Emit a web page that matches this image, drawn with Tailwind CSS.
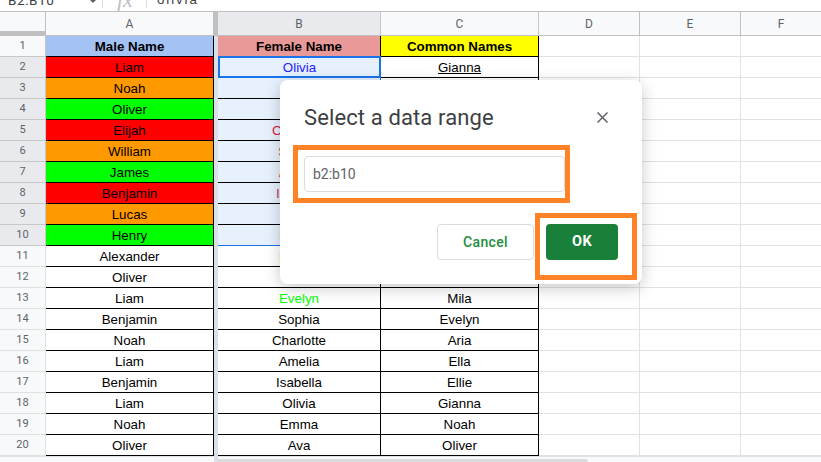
<!DOCTYPE html>
<html>
<head>
<meta charset="utf-8">
<script src="https://cdn.jsdelivr.net/npm/@tailwindcss/browser@4"></script>
</head>
<body class="bg-white">
<div class="relative h-[462px] w-[821px] overflow-hidden font-['Liberation_Sans',sans-serif] text-[13.33px] text-black">

  <!-- formula bar, cut by the top of the window -->
  <div class="flex h-[11px] items-start overflow-hidden bg-white text-[#3c4043]">
    <span class="-mt-[7px] ml-[8px] w-[80px] font-['Roboto',sans-serif] text-[13.5px] leading-[14px] tracking-[0.6px]">B2:B10</span>
    <span class="h-0 w-0 border-x-[3px] border-t-[3px] border-x-transparent border-t-[#5f6368] ml-[2px]"></span>
    <span class="ml-[6px] h-[8px] w-px bg-[#dadce0]"></span>
    <span class="-mt-[11px] ml-[14px] w-[29px] font-['Liberation_Serif',serif] text-[22px] italic leading-[22px] text-[#bdc1c6]">fx</span>
    <span class="h-[8px] w-px bg-[#dadce0]"></span>
    <span class="-mt-[7px] ml-[10px] font-['Liberation_Sans',sans-serif] text-[13.33px] leading-[14px] tracking-[1.9px]">olivia</span>
  </div>

  <!-- column headers -->
  <div class="grid h-[25px] grid-cols-[46px_168px_4px_163px_158px_101px_101px_1fr] border-y border-[#c0c0c0] bg-[#f8f9fa] font-['Roboto',sans-serif] text-[12px] text-[#5f6368]">
    <div class="border-r border-b-[4px] border-[#c0c0c0]"></div>
    <div class="flex items-center justify-center border-r border-[#c0c0c0]">A</div>
    <div class="bg-[#c0c0c0]"></div>
    <div class="flex items-center justify-center border-r border-[#c8c8c8] bg-[#e8eaed]">B</div>
    <div class="flex items-center justify-center border-r border-[#c8c8c8]">C</div>
    <div class="flex items-center justify-center border-r border-[#c0c0c0]">D</div>
    <div class="flex items-center justify-center border-r border-[#c0c0c0]">E</div>
    <div class="flex items-center justify-center">F</div>
  </div>

  <!-- rows -->
  <div class="grid grid-cols-[46px_168px_4px_163px_158px_101px_101px_1fr] auto-rows-[21px]">
    <!-- 1 -->
    <div class="flex items-center justify-center border-r border-b border-[#c8c8c8] bg-[#f8f9fa] font-['Roboto',sans-serif] text-[11px] text-[#5f6368]">1</div>
    <div class="flex items-center justify-center border-r border-b border-black bg-[#a4c2f4] pt-[2px] font-bold">Male Name</div>
    <div class="bg-[#dadfe8]"></div>
    <div class="flex items-center justify-center border-r border-b border-black bg-[#ea9999] pt-[2px] font-bold">Female Name</div>
    <div class="flex items-center justify-center border-r border-b border-black bg-[#ffff00] pt-[2px] font-bold">Common Names</div>
    <div class="border-r border-b border-[#e2e2e2]"></div><div class="border-r border-b border-[#e2e2e2]"></div><div class="border-b border-[#e2e2e2]"></div>
    <!-- 2 -->
    <div class="flex items-center justify-center border-r border-b border-[#c8c8c8] bg-[#e8eaed] font-['Roboto',sans-serif] text-[11px] text-[#5f6368]">2</div>
    <div class="flex items-center justify-center border-r border-b border-black bg-[#ff0000] pt-[2px]">Liam</div>
    <div class="bg-[#dadfe8]"></div>
    <div class="-mt-px flex h-[22px] items-center justify-center border-2 border-[#1a73e8] bg-[#e7f0fd] pt-[2px] text-[#2222ff]">Olivia</div>
    <div class="flex items-center justify-center border-r border-b border-black pt-[2px] underline">Gianna</div>
    <div class="border-r border-b border-[#e2e2e2]"></div><div class="border-r border-b border-[#e2e2e2]"></div><div class="border-b border-[#e2e2e2]"></div>
    <!-- 3 -->
    <div class="flex items-center justify-center border-r border-b border-[#c8c8c8] bg-[#e8eaed] font-['Roboto',sans-serif] text-[11px] text-[#5f6368]">3</div>
    <div class="flex items-center justify-center border-r border-b border-black bg-[#ff9900] pt-[2px]">Noah</div>
    <div class="bg-[#dadfe8]"></div>
    <div class="border-r border-b border-black border-r-[#1a73e8] bg-[#e7f0fd]"></div>
    <div class="border-r border-b border-black"></div>
    <div class="border-r border-b border-[#e2e2e2]"></div><div class="border-r border-b border-[#e2e2e2]"></div><div class="border-b border-[#e2e2e2]"></div>
    <!-- 4 -->
    <div class="flex items-center justify-center border-r border-b border-[#c8c8c8] bg-[#e8eaed] font-['Roboto',sans-serif] text-[11px] text-[#5f6368]">4</div>
    <div class="flex items-center justify-center border-r border-b border-black bg-[#00ff00] pt-[2px]">Oliver</div>
    <div class="bg-[#dadfe8]"></div>
    <div class="border-r border-b border-black border-r-[#1a73e8] bg-[#e7f0fd]"></div>
    <div class="border-r border-b border-black"></div>
    <div class="border-r border-b border-[#e2e2e2]"></div><div class="border-r border-b border-[#e2e2e2]"></div><div class="border-b border-[#e2e2e2]"></div>
    <!-- 5 -->
    <div class="flex items-center justify-center border-r border-b border-[#c8c8c8] bg-[#e8eaed] font-['Roboto',sans-serif] text-[11px] text-[#5f6368]">5</div>
    <div class="flex items-center justify-center border-r border-b border-black bg-[#ff0000] pt-[2px]">Elijah</div>
    <div class="bg-[#dadfe8]"></div>
    <div class="flex items-center justify-center border-r border-b border-black border-r-[#1a73e8] bg-[#e7f0fd] pt-[2px] text-[#e0143c]">Charlotte</div>
    <div class="border-r border-b border-black"></div>
    <div class="border-r border-b border-[#e2e2e2]"></div><div class="border-r border-b border-[#e2e2e2]"></div><div class="border-b border-[#e2e2e2]"></div>
    <!-- 6 -->
    <div class="flex items-center justify-center border-r border-b border-[#c8c8c8] bg-[#e8eaed] font-['Roboto',sans-serif] text-[11px] text-[#5f6368]">6</div>
    <div class="flex items-center justify-center border-r border-b border-black bg-[#ff9900] pt-[2px]">William</div>
    <div class="bg-[#dadfe8]"></div>
    <div class="flex items-center justify-center border-r border-b border-black border-r-[#1a73e8] bg-[#e7f0fd] pt-[2px] text-[#d04030]">Sophia</div>
    <div class="border-r border-b border-black"></div>
    <div class="border-r border-b border-[#e2e2e2]"></div><div class="border-r border-b border-[#e2e2e2]"></div><div class="border-b border-[#e2e2e2]"></div>
    <!-- 7 -->
    <div class="flex items-center justify-center border-r border-b border-[#c8c8c8] bg-[#e8eaed] font-['Roboto',sans-serif] text-[11px] text-[#5f6368]">7</div>
    <div class="flex items-center justify-center border-r border-b border-black bg-[#00ff00] pt-[2px]">James</div>
    <div class="bg-[#dadfe8]"></div>
    <div class="flex items-center justify-center border-r border-b border-black border-r-[#1a73e8] bg-[#e7f0fd] pt-[2px] text-[#e05030]">Amelia</div>
    <div class="border-r border-b border-black"></div>
    <div class="border-r border-b border-[#e2e2e2]"></div><div class="border-r border-b border-[#e2e2e2]"></div><div class="border-b border-[#e2e2e2]"></div>
    <!-- 8 -->
    <div class="flex items-center justify-center border-r border-b border-[#c8c8c8] bg-[#e8eaed] font-['Roboto',sans-serif] text-[11px] text-[#5f6368]">8</div>
    <div class="flex items-center justify-center border-r border-b border-black bg-[#ff0000] pt-[2px]">Benjamin</div>
    <div class="bg-[#dadfe8]"></div>
    <div class="flex items-center justify-center border-r border-b border-black border-r-[#1a73e8] bg-[#e7f0fd] pt-[2px] text-[#c23b60]">Isabella</div>
    <div class="border-r border-b border-black"></div>
    <div class="border-r border-b border-[#e2e2e2]"></div><div class="border-r border-b border-[#e2e2e2]"></div><div class="border-b border-[#e2e2e2]"></div>
    <!-- 9 -->
    <div class="flex items-center justify-center border-r border-b border-[#c8c8c8] bg-[#e8eaed] font-['Roboto',sans-serif] text-[11px] text-[#5f6368]">9</div>
    <div class="flex items-center justify-center border-r border-b border-black bg-[#ff9900] pt-[2px]">Lucas</div>
    <div class="bg-[#dadfe8]"></div>
    <div class="border-r border-b border-black border-r-[#1a73e8] bg-[#e7f0fd]"></div>
    <div class="border-r border-b border-black"></div>
    <div class="border-r border-b border-[#e2e2e2]"></div><div class="border-r border-b border-[#e2e2e2]"></div><div class="border-b border-[#e2e2e2]"></div>
    <!-- 10 -->
    <div class="flex items-center justify-center border-r border-b border-[#c8c8c8] bg-[#e8eaed] font-['Roboto',sans-serif] text-[11px] text-[#5f6368]">10</div>
    <div class="flex items-center justify-center border-r border-b border-black bg-[#00ff00] pt-[2px]">Henry</div>
    <div class="bg-[#dadfe8]"></div>
    <div class="flex items-center justify-center border-r border-b border-[#1a73e8] bg-[#e7f0fd] pt-[2px] text-[#e4e050]">Evelyn</div>
    <div class="border-r border-b border-black"></div>
    <div class="border-r border-b border-[#e2e2e2]"></div><div class="border-r border-b border-[#e2e2e2]"></div><div class="border-b border-[#e2e2e2]"></div>
    <!-- 11 -->
    <div class="flex items-center justify-center border-r border-b border-[#e0e0e0] bg-[#f8f9fa] font-['Roboto',sans-serif] text-[11px] text-[#5f6368]">11</div>
    <div class="flex items-center justify-center border-r border-b border-black pt-[2px]">Alexander</div>
    <div class="bg-[#dadfe8]"></div>
    <div class="flex items-center justify-center border-r border-b border-black pt-[2px] text-[#e4e050]">Evelyn</div>
    <div class="border-r border-b border-black"></div>
    <div class="border-r border-b border-[#e2e2e2]"></div><div class="border-r border-b border-[#e2e2e2]"></div><div class="border-b border-[#e2e2e2]"></div>
    <!-- 12 -->
    <div class="flex items-center justify-center border-r border-b border-[#e0e0e0] bg-[#f8f9fa] font-['Roboto',sans-serif] text-[11px] text-[#5f6368]">12</div>
    <div class="flex items-center justify-center border-r border-b border-black pt-[2px]">Oliver</div>
    <div class="bg-[#dadfe8]"></div>
    <div class="border-r border-b border-black"></div>
    <div class="border-r border-b border-black"></div>
    <div class="border-r border-b border-[#e2e2e2]"></div><div class="border-r border-b border-[#e2e2e2]"></div><div class="border-b border-[#e2e2e2]"></div>
    <!-- 13 -->
    <div class="flex items-center justify-center border-r border-b border-[#e0e0e0] bg-[#f8f9fa] font-['Roboto',sans-serif] text-[11px] text-[#5f6368]">13</div>
    <div class="flex items-center justify-center border-r border-b border-black pt-[2px]">Liam</div>
    <div class="bg-[#dadfe8]"></div>
    <div class="flex items-center justify-center border-r border-b border-black pt-[2px] text-[#00ff00]">Evelyn</div>
    <div class="flex items-center justify-center border-r border-b border-black pt-[2px]">Mila</div>
    <div class="border-r border-b border-[#e2e2e2]"></div><div class="border-r border-b border-[#e2e2e2]"></div><div class="border-b border-[#e2e2e2]"></div>
    <!-- 14 -->
    <div class="flex items-center justify-center border-r border-b border-[#e0e0e0] bg-[#f8f9fa] font-['Roboto',sans-serif] text-[11px] text-[#5f6368]">14</div>
    <div class="flex items-center justify-center border-r border-b border-black pt-[2px]">Benjamin</div>
    <div class="bg-[#dadfe8]"></div>
    <div class="flex items-center justify-center border-r border-b border-black pt-[2px]">Sophia</div>
    <div class="flex items-center justify-center border-r border-b border-black pt-[2px]">Evelyn</div>
    <div class="border-r border-b border-[#e2e2e2]"></div><div class="border-r border-b border-[#e2e2e2]"></div><div class="border-b border-[#e2e2e2]"></div>
    <!-- 15 -->
    <div class="flex items-center justify-center border-r border-b border-[#e0e0e0] bg-[#f8f9fa] font-['Roboto',sans-serif] text-[11px] text-[#5f6368]">15</div>
    <div class="flex items-center justify-center border-r border-b border-black pt-[2px]">Noah</div>
    <div class="bg-[#dadfe8]"></div>
    <div class="flex items-center justify-center border-r border-b border-black pt-[2px]">Charlotte</div>
    <div class="flex items-center justify-center border-r border-b border-black pt-[2px]">Aria</div>
    <div class="border-r border-b border-[#e2e2e2]"></div><div class="border-r border-b border-[#e2e2e2]"></div><div class="border-b border-[#e2e2e2]"></div>
    <!-- 16 -->
    <div class="flex items-center justify-center border-r border-b border-[#e0e0e0] bg-[#f8f9fa] font-['Roboto',sans-serif] text-[11px] text-[#5f6368]">16</div>
    <div class="flex items-center justify-center border-r border-b border-black pt-[2px]">Liam</div>
    <div class="bg-[#dadfe8]"></div>
    <div class="flex items-center justify-center border-r border-b border-black pt-[2px]">Amelia</div>
    <div class="flex items-center justify-center border-r border-b border-black pt-[2px]">Ella</div>
    <div class="border-r border-b border-[#e2e2e2]"></div><div class="border-r border-b border-[#e2e2e2]"></div><div class="border-b border-[#e2e2e2]"></div>
    <!-- 17 -->
    <div class="flex items-center justify-center border-r border-b border-[#e0e0e0] bg-[#f8f9fa] font-['Roboto',sans-serif] text-[11px] text-[#5f6368]">17</div>
    <div class="flex items-center justify-center border-r border-b border-black pt-[2px]">Benjamin</div>
    <div class="bg-[#dadfe8]"></div>
    <div class="flex items-center justify-center border-r border-b border-black pt-[2px]">Isabella</div>
    <div class="flex items-center justify-center border-r border-b border-black pt-[2px]">Ellie</div>
    <div class="border-r border-b border-[#e2e2e2]"></div><div class="border-r border-b border-[#e2e2e2]"></div><div class="border-b border-[#e2e2e2]"></div>
    <!-- 18 -->
    <div class="flex items-center justify-center border-r border-b border-[#e0e0e0] bg-[#f8f9fa] font-['Roboto',sans-serif] text-[11px] text-[#5f6368]">18</div>
    <div class="flex items-center justify-center border-r border-b border-black pt-[2px]">Liam</div>
    <div class="bg-[#dadfe8]"></div>
    <div class="flex items-center justify-center border-r border-b border-black pt-[2px]">Olivia</div>
    <div class="flex items-center justify-center border-r border-b border-black pt-[2px]">Gianna</div>
    <div class="border-r border-b border-[#e2e2e2]"></div><div class="border-r border-b border-[#e2e2e2]"></div><div class="border-b border-[#e2e2e2]"></div>
    <!-- 19 -->
    <div class="flex items-center justify-center border-r border-b border-[#e0e0e0] bg-[#f8f9fa] font-['Roboto',sans-serif] text-[11px] text-[#5f6368]">19</div>
    <div class="flex items-center justify-center border-r border-b border-black pt-[2px]">Noah</div>
    <div class="bg-[#dadfe8]"></div>
    <div class="flex items-center justify-center border-r border-b border-black pt-[2px]">Emma</div>
    <div class="flex items-center justify-center border-r border-b border-black pt-[2px]">Noah</div>
    <div class="border-r border-b border-[#e2e2e2]"></div><div class="border-r border-b border-[#e2e2e2]"></div><div class="border-b border-[#e2e2e2]"></div>
    <!-- 20 -->
    <div class="flex items-center justify-center border-r border-b border-[#e0e0e0] bg-[#f8f9fa] font-['Roboto',sans-serif] text-[11px] text-[#5f6368]">20</div>
    <div class="flex items-center justify-center border-r border-b border-black pt-[2px]">Oliver</div>
    <div class="bg-[#dadfe8]"></div>
    <div class="flex items-center justify-center border-r border-b border-black pt-[2px]">Ava</div>
    <div class="flex items-center justify-center border-r border-b border-black pt-[2px]">Oliver</div>
    <div class="border-r border-b border-[#e2e2e2]"></div><div class="border-r border-b border-[#e2e2e2]"></div><div class="border-b border-[#e2e2e2]"></div>
  </div>

  <!-- bottom strip with the horizontal scrollbar -->
  <div class="flex h-[6px] border-t border-[#e2e2e2] bg-[#f8f9fa]">
    <div class="w-[214px]"></div>
    <div class="w-[4px] bg-[#dadfe8]"></div>
    <div class="mt-[2px] h-[4px] w-[370px] rounded-tr-[3px] bg-[#dadce0]"></div>
  </div>

  <!-- dialog -->
  <div class="absolute left-[280px] top-[80px] h-[204px] w-[362px] rounded-lg bg-white pl-[13px] pr-[5px] shadow-[0_4px_16px_rgba(0,0,0,0.22)]">
    <div class="flex h-[65px] items-start justify-between pl-[11px] pr-[29px]">
      <h2 class="mt-[24px] font-['Roboto',sans-serif] text-[22px] font-normal leading-[28px] tracking-[0.12px] text-[#3c4043]">Select a data range</h2>
      <svg class="mt-[32px]" width="11" height="11" viewBox="0 0 11 11" fill="none" stroke="#5f6368" stroke-width="1.5"><path d="M0.5 0.5L10.5 10.5M10.5 0.5L0.5 10.5"/></svg>
    </div>
    <div class="h-[58px] w-[277px] border-[5px] border-[#ff8227] p-[6px]">
      <div class="flex h-[36px] w-[261px] items-center rounded border border-[#dadce0] bg-white pl-[8px] font-['Roboto',sans-serif] text-[14px] text-[#5f6368]">b2:b10</div>
    </div>
    <div class="mt-[10px] flex items-start justify-end gap-px">
      <div class="mt-[11px] flex h-[36px] w-[97px] items-center justify-center rounded border border-[#dadce0] bg-white font-['Roboto',sans-serif] text-[14px] font-medium tracking-[0.35px] text-[#1e8e3e]">Cancel</div>
      <div class="h-[67px] w-[102px] border-[5px] border-[#ff8227] p-[6px]">
        <div class="flex h-[36px] w-[72px] items-center justify-center rounded bg-[#188038] font-['Roboto',sans-serif] text-[14.5px] font-bold tracking-[0.5px] text-white">OK</div>
      </div>
    </div>
  </div>
</div>
</body>
</html>
